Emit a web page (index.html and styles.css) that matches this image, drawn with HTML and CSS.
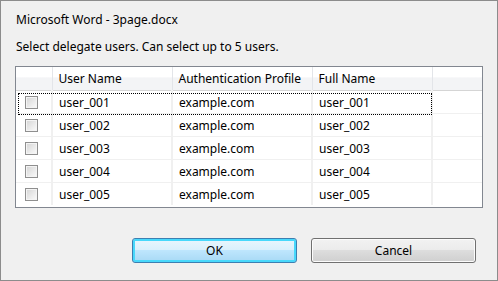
FILE: index.html
```html
<!DOCTYPE html>
<html lang="en">
<head>
    <meta charset="UTF-8">
    <title>Select delegate users</title>
    <link rel="stylesheet" href="styles.css">
</head>
<body>
    <div class="dialog">
        <div class="title">Microsoft Word - 3page.docx</div>
        <div class="prompt">Select delegate users. Can select up to 5 users.</div>

        <div class="grid-box">
            <table class="grid">
                <colgroup>
                    <col class="c-check">
                    <col class="c-user">
                    <col class="c-auth">
                    <col class="c-full">
                    <col>
                </colgroup>
                <thead>
                    <tr>
                        <th></th>
                        <th>User Name</th>
                        <th>Authentication Profile</th>
                        <th>Full Name</th>
                        <th></th>
                    </tr>
                </thead>
                <tbody>
                    <tr>
                        <td><span class="check"></span></td>
                        <td>user_001</td>
                        <td>example.com</td>
                        <td>user_001</td>
                        <td></td>
                    </tr>
                    <tr>
                        <td><span class="check"></span></td>
                        <td>user_002</td>
                        <td>example.com</td>
                        <td>user_002</td>
                        <td></td>
                    </tr>
                    <tr>
                        <td><span class="check"></span></td>
                        <td>user_003</td>
                        <td>example.com</td>
                        <td>user_003</td>
                        <td></td>
                    </tr>
                    <tr>
                        <td><span class="check"></span></td>
                        <td>user_004</td>
                        <td>example.com</td>
                        <td>user_004</td>
                        <td></td>
                    </tr>
                    <tr>
                        <td><span class="check"></span></td>
                        <td>user_005</td>
                        <td>example.com</td>
                        <td>user_005</td>
                        <td></td>
                    </tr>
                </tbody>
            </table>
            <!-- focus rectangle over the first row -->
            <div class="focus-rect"></div>
        </div>

        <div class="buttons">
            <button class="btn btn-ok">OK</button>
            <button class="btn">Cancel</button>
        </div>
    </div>
</body>
</html>
```

FILE: styles.css
```css
html, body {
    margin: 0;
    padding: 0;
}
body {
    font-family: "Noto Sans", "Liberation Sans", Arial, sans-serif;
    font-size: 12px;
    color: #000;
}
.dialog {
    box-sizing: border-box;
    width: 498px;
    height: 281px;
    background-color: #f0f0f0;
    border: 1px solid #8c8c8c;
    padding: 0 0 0 14px;
}
.title {
    height: 14px;
    line-height: 14px;
    margin-top: 12px;
    padding-left: 1px;
}
.prompt {
    height: 14px;
    line-height: 14px;
    margin-top: 13px;
    padding-left: 1px;
}
.grid-box {
    position: relative;
    box-sizing: border-box;
    width: 468px;
    height: 142px;
    margin-top: 12px;
    background-color: #fff;
    border: 1px solid #828790;
}
.grid {
    border-collapse: collapse;
    table-layout: fixed;
    width: 466px;
}
.c-check { width: 36px; }
.c-user { width: 120px; }
.c-auth { width: 140px; }
.c-full { width: 120px; }
.grid th {
    height: 23px;
    padding: 0 0 0 6px;
    font-weight: normal;
    text-align: left;
    white-space: nowrap;
    background: linear-gradient(#ffffff 0%, #ffffff 45%, #f3f4f6 46%, #f3f4f6 100%);
    border-right: 1px solid #e3e5e9;
    border-bottom: 1px solid #d5d5d5;
}
.grid th:last-child {
    border-right: none;
}
.grid td {
    height: 22px;
    padding: 0 0 0 6px;
    border-right: 2px solid #f0f0f0;
    border-bottom: 1px solid #f0f0f0;
    white-space: nowrap;
}
.grid td:first-child {
    padding-left: 9px;
}
.grid td:last-child {
    border-right: none;
}
.grid tbody tr:last-child td {
    border-bottom: none;
}
.check {
    display: block;
    box-sizing: border-box;
    width: 13px;
    height: 13px;
    border: 1px solid #8f8f8f;
    box-shadow: inset 0 0 0 1px #f4f4f4;
    background: linear-gradient(135deg, #d4d4d4 0%, #f0f0f0 70%, #fbfbfb 100%);
}
.focus-rect {
    position: absolute;
    left: 2px;
    top: 26px;
    width: 412px;
    height: 20px;
    border: 1px dotted #000;
}
.buttons {
    display: flex;
    gap: 14px;
    margin-top: 30px;
    margin-left: 117px;
}
.btn {
    box-sizing: border-box;
    width: 165px;
    height: 25px;
    margin: 0;
    padding: 0;
    font-family: inherit;
    font-size: 12px;
    color: #000;
    border: 1px solid #707070;
    border-radius: 3px;
    box-shadow: inset 0 0 0 1px #fcfcfc;
    background: linear-gradient(#f2f2f2 0%, #ebebeb 49%, #dddddd 50%, #cfcfcf 100%);
}
.btn-ok {
    border-color: #3c7fb1;
    box-shadow: inset 0 0 0 2px #48d8fb;
    background: linear-gradient(#eaf6fd 0%, #d9f0fc 49%, #bee6fd 50%, #a7d9f5 100%);
}
```
